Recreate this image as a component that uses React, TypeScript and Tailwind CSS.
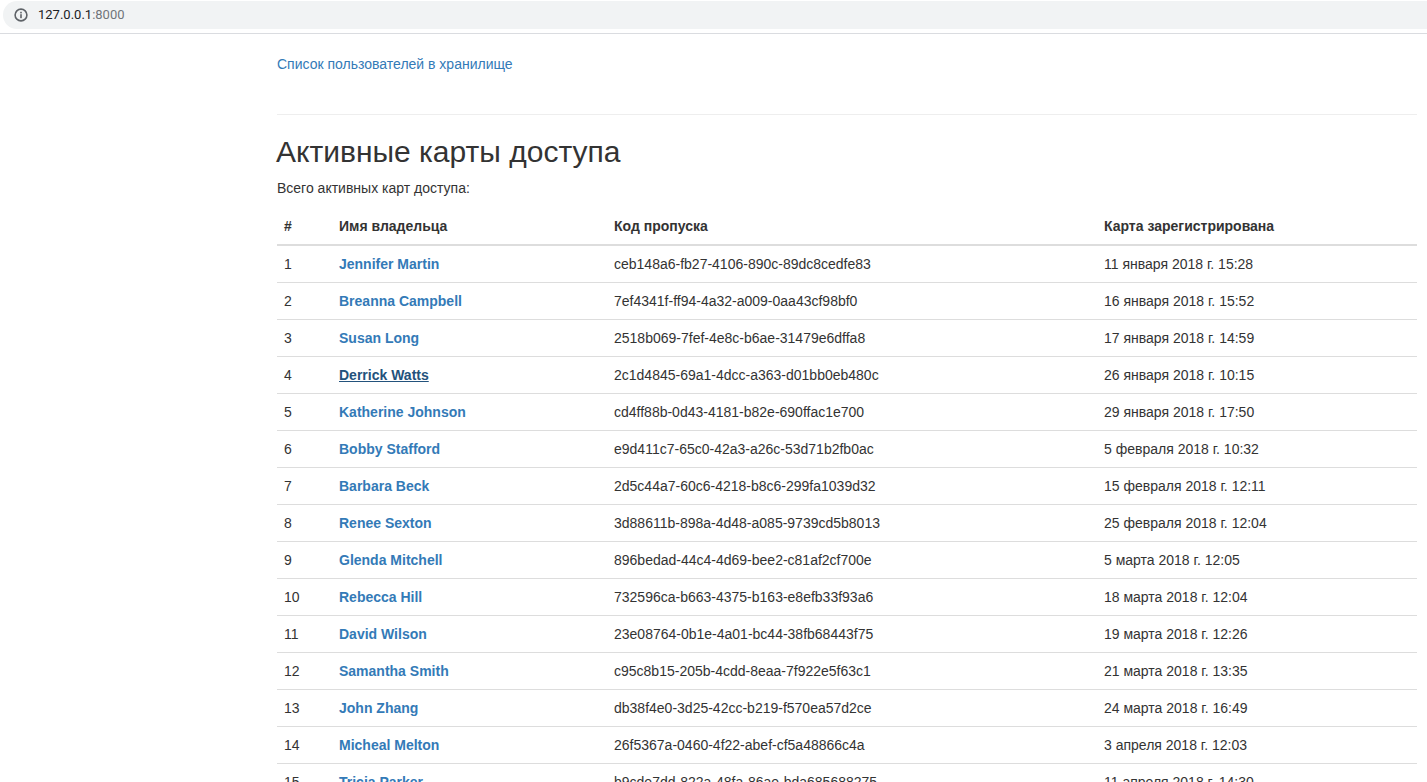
const rows = [
  ['1', 'Jennifer Martin', 'ceb148a6-fb27-4106-890c-89dc8cedfe83', '11 января 2018 г. 15:28'],
  ['2', 'Breanna Campbell', '7ef4341f-ff94-4a32-a009-0aa43cf98bf0', '16 января 2018 г. 15:52'],
  ['3', 'Susan Long', '2518b069-7fef-4e8c-b6ae-31479e6dffa8', '17 января 2018 г. 14:59'],
  ['4', 'Derrick Watts', '2c1d4845-69a1-4dcc-a363-d01bb0eb480c', '26 января 2018 г. 10:15'],
  ['5', 'Katherine Johnson', 'cd4ff88b-0d43-4181-b82e-690ffac1e700', '29 января 2018 г. 17:50'],
  ['6', 'Bobby Stafford', 'e9d411c7-65c0-42a3-a26c-53d71b2fb0ac', '5 февраля 2018 г. 10:32'],
  ['7', 'Barbara Beck', '2d5c44a7-60c6-4218-b8c6-299fa1039d32', '15 февраля 2018 г. 12:11'],
  ['8', 'Renee Sexton', '3d88611b-898a-4d48-a085-9739cd5b8013', '25 февраля 2018 г. 12:04'],
  ['9', 'Glenda Mitchell', '896bedad-44c4-4d69-bee2-c81af2cf700e', '5 марта 2018 г. 12:05'],
  ['10', 'Rebecca Hill', '732596ca-b663-4375-b163-e8efb33f93a6', '18 марта 2018 г. 12:04'],
  ['11', 'David Wilson', '23e08764-0b1e-4a01-bc44-38fb68443f75', '19 марта 2018 г. 12:26'],
  ['12', 'Samantha Smith', 'c95c8b15-205b-4cdd-8eaa-7f922e5f63c1', '21 марта 2018 г. 13:35'],
  ['13', 'John Zhang', 'db38f4e0-3d25-42cc-b219-f570ea57d2ce', '24 марта 2018 г. 16:49'],
  ['14', 'Micheal Melton', '26f5367a-0460-4f22-abef-cf5a48866c4a', '3 апреля 2018 г. 12:03'],
  ['15', 'Tricia Parker', 'b9cde7dd-822a-48fa-86ae-bda685688275', '11 апреля 2018 г. 14:30'],
];

function AddressBar() {
  return (
    <div className="h-[34px] border-b border-[#dadce0] bg-white pt-px pl-[3px]">
      <div className="flex h-[28px] items-center rounded-l-[14px] bg-[#f1f3f4] pl-[10px]">
        <svg width="16" height="16" viewBox="0 0 16 16" fill="none" className="shrink-0">
          <circle cx="8" cy="8" r="5.9" stroke="#5f6368" strokeWidth="1.6" />
          <rect x="7.2" y="7.2" width="1.6" height="4" fill="#5f6368" />
          <rect x="7.2" y="4.8" width="1.6" height="1.6" fill="#5f6368" />
        </svg>
        <span className="ml-[9px] font-['Roboto',sans-serif] text-[13px] text-[#202124]">
          127.0.0.1<span className="text-[#70757a]">:8000</span>
        </span>
      </div>
    </div>
  );
}

export default function App() {
  return (
    <div className="h-[782px] overflow-hidden bg-white font-['Liberation_Sans',Arial,sans-serif] text-[14px] leading-[20px] text-[#333]">
      <AddressBar />
      <div className="mr-[10px] ml-[277px] pt-[20px]">
        <a href="#" className="text-[#337ab7]">Список пользователей в хранилище</a>
        <hr className="mt-[40px] border-[#eee]" />
        <h2 className="mt-[20px] mb-[10px] -ml-px text-[30px] leading-[33px] font-medium">Активные карты доступа</h2>
        <p className="mb-[10px]">Всего активных карт доступа:</p>
        <table className="w-[1140px] table-fixed border-collapse">
          <thead>
            <tr className="border-b-2 border-[#ddd] text-left">
              <th className="w-[54px] py-[8px] pr-[8px] pl-[7px] font-bold">#</th>
              <th className="w-[275px] p-[8px] font-bold">Имя владельца</th>
              <th className="w-[490px] p-[8px] font-bold">Код пропуска</th>
              <th className="p-[8px] font-bold">Карта зарегистрирована</th>
            </tr>
          </thead>
          <tbody>
            {rows.map((row) => (
              <tr key={row[0]} className="border-b border-[#ddd]">
                <td className="py-[8px] pr-[8px] pl-[7px]">{row[0]}</td>
                <td className="p-[8px]">
                  {row[0] === '4' ? (
                    <a href="#" className="font-bold text-[#23527c] underline">{row[1]}</a>
                  ) : (
                    <a href="#" className="font-bold text-[#337ab7]">{row[1]}</a>
                  )}
                </td>
                <td className="p-[8px]">{row[2]}</td>
                <td className="p-[8px]">{row[3]}</td>
              </tr>
            ))}
          </tbody>
        </table>
      </div>
    </div>
  );
}
